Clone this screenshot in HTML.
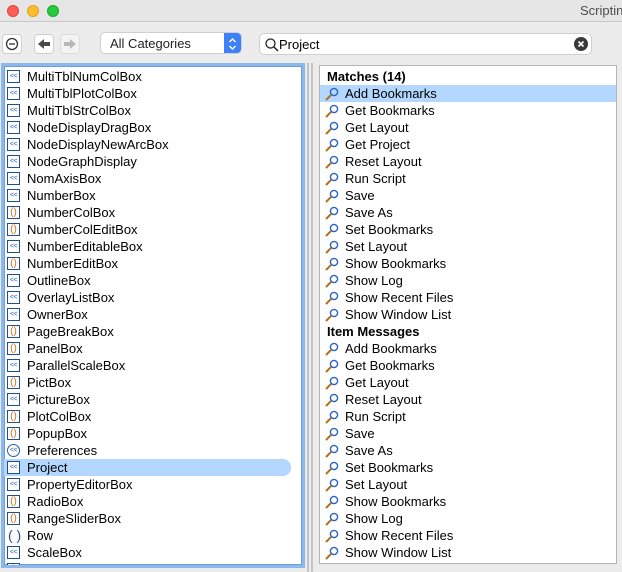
<!DOCTYPE html>
<html><head><meta charset="utf-8"><style>
*{box-sizing:border-box;margin:0;padding:0}
body{width:622px;height:572px;overflow:hidden;background:#ececec;font-family:"Liberation Sans",Arial,sans-serif;font-size:13px;color:#000;position:relative}
.title{position:absolute;left:0;top:0;width:622px;height:22px;background:#e6e6e6;border-bottom:1px solid #c8c8c8}
.dot{position:absolute;top:5px;width:12px;height:12px;border-radius:50%}
.btn{position:absolute;background:#fff;border:1px solid #cfcfcf;border-radius:4px}
.lp{position:absolute;left:1px;top:63px;width:304px;height:505px;border:3px solid #8cb8ee;background:#fff;overflow:hidden}
.lp .in{position:absolute;left:0;top:0;right:0;bottom:0;border:1px solid #6f9fd8}
.row{position:absolute;left:0;height:17px;line-height:17px;white-space:nowrap}
.ic{position:absolute;left:3px;top:2px;width:13px;height:13px;border:1px solid #1f4f8c;background:#fff;font-size:7px;line-height:11px;text-align:center;color:#2a5aa8;letter-spacing:-0.5px}
.ic.o{color:#d66a1a;font-size:10px;letter-spacing:0}
.lt{position:absolute;left:23px}
.rp{position:absolute;left:319px;top:65px;width:298px;height:499px;border:1px solid #b5b5b5;background:#fff;overflow:hidden}
.rr{position:absolute;left:0;height:17px;line-height:17px;white-space:nowrap;width:100%}
.rr .t{position:absolute;left:25px}
.rr svg{position:absolute;left:4px;top:2px}
.hd{font-weight:bold;left:7px!important}
.sel{background:#b3d7ff}
</style></head><body>
<div class="title">
<div class="dot" style="left:7px;background:#fe5f57;border:1px solid #e0443e"></div>
<div class="dot" style="left:27px;background:#febc2e;border:1px solid #dea123"></div>
<div class="dot" style="left:47px;background:#28c840;border:1px solid #1aab29"></div>
<div style="position:absolute;left:580px;top:3px;color:#4d4d4d;font-size:13px">Scripting</div>
</div>
<div class="btn" style="left:2px;top:34px;width:20px;height:20px"><svg width="18" height="18" style="position:absolute;left:0;top:0"><circle cx="9" cy="9" r="5.5" fill="none" stroke="#333" stroke-width="1.3"/><line x1="6" y1="9" x2="12" y2="9" stroke="#333" stroke-width="1.3"/></svg></div>
<div class="btn" style="left:34px;top:34px;width:20px;height:20px"><svg width="18" height="18" style="position:absolute;left:0;top:0"><path d="M3 9 L9 4 V7 H15 V11 H9 V14 Z" fill="#4a4a4a"/></svg></div>
<div class="btn" style="left:60px;top:34px;width:20px;height:20px;background:#f3f3f3;border-color:#ddd"><svg width="18" height="18" style="position:absolute;left:0;top:0"><path d="M15 9 L9 4 V7 H3 V11 H9 V14 Z" fill="#b8b8b8"/></svg></div>
<div class="btn" style="left:100px;top:32px;width:142px;height:22px;border-radius:5px;overflow:hidden"><span style="position:absolute;left:9px;top:3px;color:#222">All Categories</span><div style="position:absolute;right:0;top:0;width:17px;height:22px;background:#3c82f6"><svg width="17" height="22"><path d="M5.5 9 L8.5 6 L11.5 9 M5.5 13 L8.5 16 L11.5 13" fill="none" stroke="#fff" stroke-width="1.4"/></svg></div></div>
<div class="btn" style="left:259px;top:33px;width:333px;height:22px;border-radius:5px"><svg width="18" height="18" style="position:absolute;left:3px;top:2px"><circle cx="7.5" cy="7.5" r="4.5" fill="none" stroke="#222" stroke-width="1.3"/><line x1="11" y1="11" x2="15" y2="15" stroke="#222" stroke-width="1.5"/></svg><span style="position:absolute;left:19px;top:3px">Project</span><svg width="14" height="14" style="position:absolute;right:3px;top:3px"><circle cx="7" cy="7" r="7" fill="#3a3a3a"/><path d="M4.5 4.5 L9.5 9.5 M9.5 4.5 L4.5 9.5" stroke="#fff" stroke-width="1.6"/></svg></div>
<div style="position:absolute;left:307px;top:63px;width:2px;height:509px;background:#c4c4c4"></div>
<div style="position:absolute;left:311px;top:63px;width:2px;height:509px;background:#c4c4c4"></div>
<div class="lp"><div class="in"></div>
<div class="row" style="top:2px"><span class="ic">&lt;&lt;</span><span class="lt">MultiTblNumColBox</span></div>
<div class="row" style="top:19px"><span class="ic">&lt;&lt;</span><span class="lt">MultiTblPlotColBox</span></div>
<div class="row" style="top:36px"><span class="ic">&lt;&lt;</span><span class="lt">MultiTblStrColBox</span></div>
<div class="row" style="top:53px"><span class="ic">&lt;&lt;</span><span class="lt">NodeDisplayDragBox</span></div>
<div class="row" style="top:70px"><span class="ic">&lt;&lt;</span><span class="lt">NodeDisplayNewArcBox</span></div>
<div class="row" style="top:87px"><span class="ic">&lt;&lt;</span><span class="lt">NodeGraphDisplay</span></div>
<div class="row" style="top:104px"><span class="ic">&lt;&lt;</span><span class="lt">NomAxisBox</span></div>
<div class="row" style="top:121px"><span class="ic">&lt;&lt;</span><span class="lt">NumberBox</span></div>
<div class="row" style="top:138px"><span class="ic o">()</span><span class="lt">NumberColBox</span></div>
<div class="row" style="top:155px"><span class="ic o">()</span><span class="lt">NumberColEditBox</span></div>
<div class="row" style="top:172px"><span class="ic">&lt;&lt;</span><span class="lt">NumberEditableBox</span></div>
<div class="row" style="top:189px"><span class="ic o">()</span><span class="lt">NumberEditBox</span></div>
<div class="row" style="top:206px"><span class="ic">&lt;&lt;</span><span class="lt">OutlineBox</span></div>
<div class="row" style="top:223px"><span class="ic">&lt;&lt;</span><span class="lt">OverlayListBox</span></div>
<div class="row" style="top:240px"><span class="ic">&lt;&lt;</span><span class="lt">OwnerBox</span></div>
<div class="row" style="top:257px"><span class="ic o">()</span><span class="lt">PageBreakBox</span></div>
<div class="row" style="top:274px"><span class="ic o">()</span><span class="lt">PanelBox</span></div>
<div class="row" style="top:291px"><span class="ic">&lt;&lt;</span><span class="lt">ParallelScaleBox</span></div>
<div class="row" style="top:308px"><span class="ic o">()</span><span class="lt">PictBox</span></div>
<div class="row" style="top:325px"><span class="ic">&lt;&lt;</span><span class="lt">PictureBox</span></div>
<div class="row" style="top:342px"><span class="ic o">()</span><span class="lt">PlotColBox</span></div>
<div class="row" style="top:359px"><span class="ic o">()</span><span class="lt">PopupBox</span></div>
<div class="row" style="top:376px"><span class="ic" style="border-radius:50%;border-color:#2a5aa8">&lt;&lt;</span><span class="lt">Preferences</span></div>
<div class="row sel" style="top:393px;width:287px;border-radius:0 8px 8px 0"><span class="ic">&lt;&lt;</span><span class="lt">Project</span></div>
<div class="row" style="top:410px"><span class="ic">&lt;&lt;</span><span class="lt">PropertyEditorBox</span></div>
<div class="row" style="top:427px"><span class="ic o">()</span><span class="lt">RadioBox</span></div>
<div class="row" style="top:444px"><span class="ic o">()</span><span class="lt">RangeSliderBox</span></div>
<div class="row" style="top:461px"><span style="position:absolute;left:4px;top:0;color:#1f4f8c;font-size:14px">( )</span><span class="lt">Row</span></div>
<div class="row" style="top:478px"><span class="ic">&lt;&lt;</span><span class="lt">ScaleBox</span></div>
<div class="row" style="top:495px"><span class="ic o">()</span><span class="lt">ScatterBox</span></div>
</div>
<div class="rp" id="rp"></div>
<script>
var a=["Add Bookmarks","Get Bookmarks","Get Layout","Get Project","Reset Layout","Run Script","Save","Save As","Set Bookmarks","Set Layout","Show Bookmarks","Show Log","Show Recent Files","Show Window List"];
var b=["Add Bookmarks","Get Bookmarks","Get Layout","Reset Layout","Run Script","Save","Save As","Set Bookmarks","Set Layout","Show Bookmarks","Show Log","Show Recent Files","Show Window List","Show Menu Messages"];
var ic='<svg width="16" height="14"><circle cx="10" cy="5" r="3.6" fill="none" stroke="#2a62c8" stroke-width="1.4"/><line x1="7.3" y1="7.7" x2="2" y2="13" stroke="#b07020" stroke-width="2"/></svg>';
var h='',y=2;
function hd(t){h+='<div class="rr" style="top:'+y+'px"><span class="t hd">'+t+'</span></div>';y+=17;}
function it(t,s){h+='<div class="rr'+(s?' sel':'')+'" style="top:'+y+'px">'+ic+'<span class="t">'+t+'</span></div>';y+=17;}
hd("Matches (14)");a.forEach(function(t,i){it(t,i==0)});hd("Item Messages");b.forEach(function(t){it(t)});
document.getElementById('rp').innerHTML=h;
</script>
</body></html>
